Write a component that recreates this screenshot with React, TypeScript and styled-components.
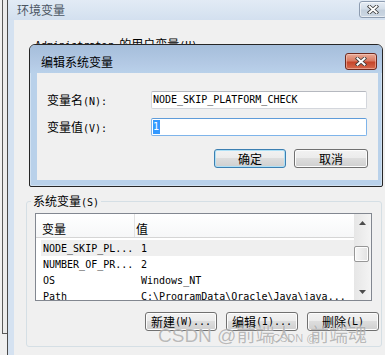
import styled, { createGlobalStyle } from "styled-components";

const GlobalStyle = createGlobalStyle`
  html, body { margin: 0; padding: 0; }
  body {
    background: #f0f0f0;
    font-family: "Noto Sans CJK SC", "Liberation Sans", sans-serif;
    font-size: 12px;
    line-height: 14px;
    color: #000;
  }
`;

const Desktop = styled.div`
  position: relative;
  width: 385px;
  height: 355px;
  overflow: hidden;
  background: #f0f0f0;
`;

// edge of another window peeking out on the left
const BackWindowEdge = styled.div`
  position: absolute;
  left: 2px;
  top: 0;
  width: 10px;
  height: 333px;
  border-left: 1px solid #5a5a5a;
  border-bottom: 1px solid #5a5a5a;
  background: #ebebeb;
`;

const MainWindow = styled.section`
  position: absolute;
  left: 7px;
  top: 0;
  width: 379px;
  height: 380px;
  border-left: 1px solid #4a4a4a;
  background: #d5e2f1;
  display: flex;
  flex-direction: column;
`;

const OuterTitleBar = styled.div`
  height: 20px;
  display: flex;
  justify-content: space-between;
  align-items: flex-start;
  padding-left: 9px;
  background: linear-gradient(#e2ebf5, #d3e0ef);
`;

const OuterTitle = styled.span`
  margin-top: 3px;
  color: #4b5562;
`;

const CloseButton = styled.div<{ $active?: boolean }>`
  display: flex;
  align-items: center;
  justify-content: center;
  box-sizing: border-box;
  border-radius: 3px;
  border: 1px solid ${(p) => (p.$active ? "#6e2a1f" : "#8d9cb0")};
  box-shadow: inset 0 0 0 1px ${(p) => (p.$active ? "rgba(255,220,210,0.45)" : "rgba(255,255,255,0.55)")};
  background: ${(p) =>
    p.$active
      ? "linear-gradient(#e9ab98 0%, #d97a62 45%, #c5452a 55%, #d66a4e 100%)"
      : "linear-gradient(#e6edf5 0%, #d4dee9 45%, #c3cfdc 55%, #ccd7e3 100%)"};
`;

const OuterClose = styled(CloseButton)`
  width: 28px;
  height: 17px;
  margin-top: 1px;
`;

const WindowBody = styled.div`
  flex: 1;
  display: flex;
  padding-left: 6px;
`;

const Content = styled.div`
  flex: 1;
  background: #f0f0f0;
  display: flex;
  flex-direction: column;
`;

const UserSection = styled.div`
  height: 174px;
  box-sizing: border-box;
  padding: 17px 0 0 21px;
`;

const Mono = styled.span`
  font-family: "DejaVu Sans Mono", "Liberation Mono", monospace;
  font-size: 10px;
  line-height: 1;
`;

const GroupBox = styled.fieldset`
  margin: 0 5px 0 12px;
  padding: 5px 0 15px 4px;
  border: 1px solid #d5dfe5;
  border-radius: 3px;
  min-width: 0;
`;

const GroupLegend = styled.legend`
  padding: 0 2px;
  height: 14px;
  line-height: 14px;
`;

const ListView = styled.div`
  width: 335px;
  height: 86px;
  margin-left: 4px;
  border: 1px solid #828790;
  background: #fff;
  display: flex;
`;

const ListMain = styled.div`
  flex: 1;
  overflow: hidden;
  display: flex;
  flex-direction: column;
`;

const HeaderRow = styled.div`
  height: 24px;
  flex-shrink: 0;
  box-sizing: border-box;
  display: flex;
  border-bottom: 1px solid #d5d5d5;
  background: linear-gradient(#ffffff, #f6f7f8);
  margin-bottom: 2px;
`;

const HeaderCell = styled.div<{ $width?: number; $pad: number }>`
  ${(p) => (p.$width ? `width: ${p.$width}px; border-right: 1px solid #e2e2e2;` : "flex: 1;")}
  padding: 8px 0 0 ${(p) => p.$pad}px;
  box-sizing: border-box;
`;

const DataRow = styled.div<{ $selected?: boolean }>`
  display: grid;
  grid-template-columns: 98px 1fr;
  height: 16px;
  flex-shrink: 0;
  margin-left: 5px;
  padding-left: 2px;
  line-height: 17px;
  white-space: nowrap;
  overflow: hidden;
  font-family: "DejaVu Sans Mono", "Liberation Mono", monospace;
  font-size: 10px;
  background: ${(p) => (p.$selected ? "#efefef" : "transparent")};
`;

const ScrollBar = styled.div`
  width: 17px;
  display: flex;
  flex-direction: column;
  background: linear-gradient(90deg, #e6e6e6, #f4f4f4);
`;

const ScrollArrow = styled.div`
  height: 17px;
  display: flex;
  align-items: center;
  justify-content: center;
`;

const ScrollTrack = styled.div`
  flex: 1;
  padding-top: 15px;
`;

const Thumb = styled.div`
  width: 15px;
  height: 16px;
  box-sizing: border-box;
  border: 1px solid #979797;
  border-radius: 2px;
  background: linear-gradient(90deg, #f7f7f7, #e2e2e2);
  box-shadow: inset 0 0 0 1px #fdfdfd;
`;

const ButtonRow = styled.div<{ $mt: number; $pr: number; $gap: number }>`
  display: flex;
  justify-content: flex-end;
  gap: ${(p) => p.$gap}px;
  margin-top: ${(p) => p.$mt}px;
  padding-right: ${(p) => p.$pr}px;
`;

const Button = styled.div<{ $width: number; $default?: boolean }>`
  width: ${(p) => p.$width}px;
  height: 19px;
  box-sizing: border-box;
  display: flex;
  align-items: center;
  justify-content: center;
  border: 1px solid ${(p) => (p.$default ? "#3c7fb1" : "#707070")};
  border-radius: 3px;
  background: linear-gradient(#f2f2f2 0%, #ebebeb 50%, #dddddd 50%, #cfcfcf 100%);
  box-shadow: inset 0 0 0 1px ${(p) => (p.$default ? "#aee0f6" : "#fcfcfc")};
`;

const Dialog = styled.section`
  position: absolute;
  left: 29px;
  top: 44px;
  width: 352px;
  height: 141px;
  border: 1px solid #262626;
  border-radius: 6px 6px 2px 2px;
  background: #b9d1ea;
  box-shadow: inset 0 0 0 1px rgba(255, 255, 255, 0.35);
  display: flex;
  flex-direction: column;
`;

const DialogTitleBar = styled.div`
  height: 28px;
  display: flex;
  justify-content: space-between;
  align-items: flex-start;
  padding: 0 5px 0 11px;
  border-radius: 5px 5px 0 0;
  background: linear-gradient(#a5bedb, #b4cae5 70%, #b9d1ea);
`;

const DialogTitle = styled.span`
  margin-top: 10px;
  color: #000;
`;

const DialogClose = styled(CloseButton)`
  width: 32px;
  height: 17px;
  margin-top: 8px;
`;

const DialogContent = styled.div`
  height: 107px;
  margin: 0 4px 0 7px;
  box-sizing: border-box;
  padding: 18px 0 0 10px;
  background: #f0f0f0;
`;

const FieldRow = styled.div`
  display: flex;
  align-items: center;
  height: 18px;
  & + & {
    margin-top: 9px;
  }
`;

const FieldLabel = styled.label`
  width: 104px;
`;

const TextBox = styled.div<{ $focused?: boolean }>`
  width: 216px;
  height: 18px;
  box-sizing: border-box;
  display: flex;
  align-items: center;
  padding-left: 1px;
  border: 1px solid ${(p) => (p.$focused ? "#7eb4ea" : "#d3d6dc")};
  border-top-color: ${(p) => (p.$focused ? "#5f9cd9" : "#b5b8bf")};
  border-radius: 2px;
  background: #fff;
  font-family: "DejaVu Sans Mono", "Liberation Mono", monospace;
  font-size: 10px;
`;

const Selection = styled.span`
  display: inline-block;
  height: 14px;
  line-height: 14px;
  padding-right: 1px;
  background: #3399ff;
  color: #fff;
`;

const Watermark = styled.div<{ $left: number; $top: number; $size: number }>`
  position: absolute;
  left: ${(p) => p.$left}px;
  top: ${(p) => p.$top}px;
  font-family: "Liberation Sans", "Noto Sans CJK SC", sans-serif;
  font-size: ${(p) => p.$size}px;
  line-height: 1;
  white-space: nowrap;
  color: rgba(120, 120, 120, 0.5);
  text-shadow: 0 0 1px rgba(255, 255, 255, 0.8);
  pointer-events: none;
`;

const CloseGlyph = () => (
  <svg width="12" height="9" viewBox="0 0 12 9">
    <path d="M2.5 1.5 L9.5 7.5 M9.5 1.5 L2.5 7.5" stroke="#3a3a3a" strokeWidth="3.6" strokeLinecap="square" />
    <path d="M2.5 1.5 L9.5 7.5 M9.5 1.5 L2.5 7.5" stroke="#fff" strokeWidth="2" strokeLinecap="square" />
  </svg>
);

const Arrow = ({ up }: { up?: boolean }) => (
  <svg width="7" height="4" viewBox="0 0 7 4">
    <path d={up ? "M0 4 L3.5 0 L7 4Z" : "M0 0 L7 0 L3.5 4Z"} fill="#4d4d4d" />
  </svg>
);

const systemVars = [
  { name: "NODE_SKIP_PL...", value: "1", selected: true },
  { name: "NUMBER_OF_PR...", value: "2" },
  { name: "OS", value: "Windows_NT" },
  { name: "Path", value: "C:\\ProgramData\\Oracle\\Java\\java..." },
];

const App = () => {
  return (
    <>
      <GlobalStyle />
      <Desktop>
        <BackWindowEdge />
        <MainWindow>
          <OuterTitleBar>
            <OuterTitle>环境变量</OuterTitle>
            <OuterClose>
              <CloseGlyph />
            </OuterClose>
          </OuterTitleBar>
          <WindowBody>
            <Content>
              <UserSection>
                <Mono>Administrator </Mono>的用户变量<Mono>(U)</Mono>
              </UserSection>
              <GroupBox>
                <GroupLegend>
                  系统变量<Mono>(S)</Mono>
                </GroupLegend>
                <ListView>
                  <ListMain>
                    <HeaderRow>
                      <HeaderCell $width={99} $pad={6}>
                        变量
                      </HeaderCell>
                      <HeaderCell $pad={1}>值</HeaderCell>
                    </HeaderRow>
                    {systemVars.map((v) => (
                      <DataRow key={v.name} $selected={v.selected}>
                        <span>{v.name}</span>
                        <span>{v.value}</span>
                      </DataRow>
                    ))}
                  </ListMain>
                  <ScrollBar>
                    <ScrollArrow>
                      <Arrow up />
                    </ScrollArrow>
                    <ScrollTrack>
                      <Thumb />
                    </ScrollTrack>
                    <ScrollArrow>
                      <Arrow />
                    </ScrollArrow>
                  </ScrollBar>
                </ListView>
                <ButtonRow $mt={11} $pr={2} $gap={9}>
                  <Button $width={72}>
                    新建<Mono>(W)...</Mono>
                  </Button>
                  <Button $width={72}>
                    编辑<Mono>(I)...</Mono>
                  </Button>
                  <Button $width={72}>
                    删除<Mono>(L)</Mono>
                  </Button>
                </ButtonRow>
              </GroupBox>
            </Content>
          </WindowBody>
        </MainWindow>

        <Dialog>
          <DialogTitleBar>
            <DialogTitle>编辑系统变量</DialogTitle>
            <DialogClose $active>
              <CloseGlyph />
            </DialogClose>
          </DialogTitleBar>
          <DialogContent>
            <FieldRow>
              <FieldLabel>
                变量名<Mono>(N):</Mono>
              </FieldLabel>
              <TextBox>NODE_SKIP_PLATFORM_CHECK</TextBox>
            </FieldRow>
            <FieldRow>
              <FieldLabel>
                变量值<Mono>(V):</Mono>
              </FieldLabel>
              <TextBox $focused>
                <Selection>1</Selection>
              </TextBox>
            </FieldRow>
            <ButtonRow $mt={13} $pr={10} $gap={8}>
              <Button $width={72} $default>
                确定
              </Button>
              <Button $width={74}>取消</Button>
            </ButtonRow>
          </DialogContent>
        </Dialog>

        <Watermark $left={158} $top={326} $size={19}>
          CSDN @前端人
        </Watermark>
        <Watermark $left={272} $top={333} $size={11}>
          CSDN @
        </Watermark>
        <Watermark $left={310} $top={326} $size={19}>
          前端魂
        </Watermark>
      </Desktop>
    </>
  );
};

export default App;
